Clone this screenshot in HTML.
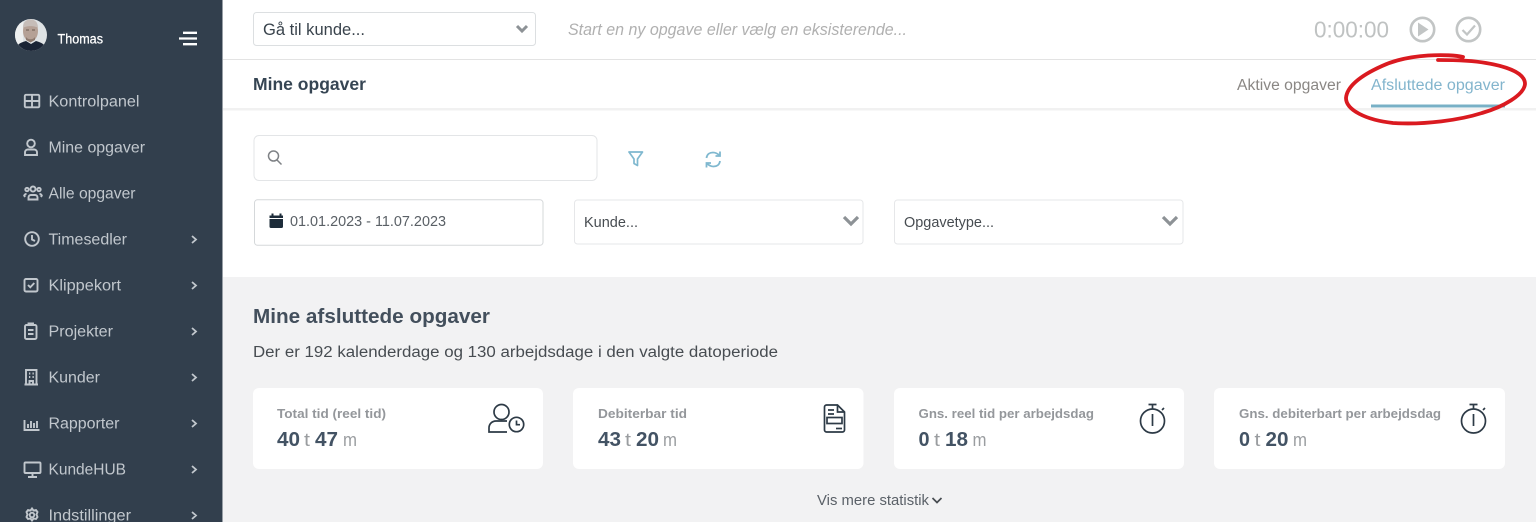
<!DOCTYPE html>
<html lang="da">
<head>
<meta charset="utf-8">
<title>Mine opgaver</title>
<style>
html,body{margin:0;padding:0;width:1536px;height:522px;overflow:hidden;background:#fff}
svg{display:block;position:absolute;left:0;top:0}
text{font-family:"Liberation Sans",sans-serif;white-space:pre}
.nav{font-size:15.5px;fill:#c1c7cd}
.ni{fill:none;stroke:#c1c7cd;stroke-width:1.9}
.ch{fill:none;stroke:#c1c7cd;stroke-width:1.8}
.lb{font-size:13px;font-weight:bold;fill:#94979b}
.v{font-size:20.5px;font-weight:bold;fill:#435364}
.u{font-size:18px;fill:#9a9da0}
.ic{fill:none;stroke:#2d3a46;stroke-width:1.7}
</style>
</head>
<body>
<svg width="1536" height="522" viewBox="0 0 1536 522" xmlns="http://www.w3.org/2000/svg">
<defs><clipPath id="av"><circle cx="31" cy="35" r="16"/></clipPath></defs>
<rect x="223" y="277" width="1313" height="245" fill="#f2f2f3"/>
<rect x="0" y="0" width="222.500" height="522" fill="#323f4d"/>
<rect x="223" y="59" width="1313" height="1" fill="#e3e3e3"/>
<rect x="223" y="108" width="1313" height="2.500" fill="#f1f1f1"/>

<!-- avatar -->
<g clip-path="url(#av)">
<rect x="15" y="19" width="32" height="32" fill="#dfe3e5"/>
<rect x="15" y="19" width="8" height="32" fill="#eef0f0"/>
<ellipse cx="30.500" cy="31" rx="7.500" ry="10.500" fill="#b5a196"/>
<path d="M23 28c0-6 3-8.500 7.500-8.500s7.500 2.500 7.500 8.500c-3-2.500-12-2.500-15 0z" fill="#c6bdb8"/>
<path d="M26 30h3M32 30h3" stroke="#6b5a50" stroke-width="1.100"/>
<path d="M26 37c2 3 7 3 9 0v3l-4.500 2.500-4.500-2.500z" fill="#8d7a6f"/>
<path d="M17 51v-5c2-3 6-4 9-5l5 3 5-3c3 1 7 2 9 5v5z" fill="#1a2435"/>
</g>
<text x="57.500" y="43.500" font-size="13.500" fill="#ffffff" stroke="#ffffff" stroke-width=".25" textLength="45.500" lengthAdjust="spacingAndGlyphs">Thomas</text>
<path d="M183 32.800h14M179 38.500h18M183 44.200h14" stroke="#fff" stroke-width="2.300" fill="none"/>

<!-- nav -->
<text class="nav" x="48.500" y="106.500" textLength="91" lengthAdjust="spacingAndGlyphs">Kontrolpanel</text>
<text class="nav" x="48.500" y="152.500" textLength="96.500" lengthAdjust="spacingAndGlyphs">Mine opgaver</text>
<text class="nav" x="48.500" y="198.500" textLength="87" lengthAdjust="spacingAndGlyphs">Alle opgaver</text>
<text class="nav" x="48.500" y="244.500" textLength="78.500" lengthAdjust="spacingAndGlyphs">Timesedler</text>
<text class="nav" x="48.500" y="290.500" textLength="72.500" lengthAdjust="spacingAndGlyphs">Klippekort</text>
<text class="nav" x="48.500" y="336.500" textLength="64.500" lengthAdjust="spacingAndGlyphs">Projekter</text>
<text class="nav" x="48.500" y="382.500" textLength="51.500" lengthAdjust="spacingAndGlyphs">Kunder</text>
<text class="nav" x="48.500" y="428.500" textLength="71" lengthAdjust="spacingAndGlyphs">Rapporter</text>
<text class="nav" x="48.500" y="474.500" textLength="77.500" lengthAdjust="spacingAndGlyphs">KundeHUB</text>
<text class="nav" x="48.500" y="520.500" textLength="82.500" lengthAdjust="spacingAndGlyphs">Indstillinger</text>

<!-- nav icons -->
<g class="ni">
<rect x="24.800" y="94.800" width="14.500" height="12.500" rx="1.200"/><path d="M24.800 101h14.500M32 94.800v12.500"/>
<circle cx="31" cy="143.500" r="3.800"/><path d="M25 155v-2.500c0-2 1.500-3 3-3h6c1.500 0 3 1 3 3v2.500z"/>
<circle cx="33" cy="189" r="2.500"/><circle cx="27" cy="189.500" r="1.700"/><circle cx="39" cy="189.500" r="1.700"/>
<path d="M28.500 199.500v-2c0-1.500 1-2.500 2.500-2.500h4c1.500 0 2.500 1 2.500 2.500v2zM25 197l-.8-1.500c.5-1 1.300-1.500 2.300-1.500M41 197l.8-1.500c-.5-1-1.300-1.500-2.300-1.500"/>
<circle cx="32" cy="239" r="6.800"/><path d="M32 235v4.500l3 1.500"/>
<rect x="24.500" y="279" width="13" height="12.500" rx="1.500"/><path d="M28 285l2.300 2.300 4-4.300"/>
<rect x="25" y="325" width="11.500" height="14" rx="1.500"/><path d="M28.500 325v-1.500h4.500v1.500M28 330h5.500M28 334h5.500"/>
<path d="M24.500 384.500h13.500M26 384.500v-14.500h10.500v14.500M29 373.500h1.300M32.500 373.500h1.300M29 377h1.300M32.500 377h1.300M29.500 384.500v-3.500h3.500v3.500"/>
<path d="M24.500 420v10h15M28 428v-4M31 428v-7M34 428v-5M37 428v-7"/>
<rect x="24.500" y="462.500" width="16" height="10.500" rx="1"/><path d="M32.500 473v3M28 477h9"/>
<circle cx="32" cy="515" r="2.300"/><path d="M32 508.500l1.500 2 2.500-.5 1.500 2-1 2.500 1 2.500-1.500 2-2.500-.5-1.500 2-1.500-2-2.500.5-1.500-2 1-2.500-1-2.500 1.500-2 2.500.5z"/>
</g>
<g class="ch">
<path d="M192 236l4 3.500-4 3.500M192 282l4 3.500-4 3.500M192 328l4 3.500-4 3.500M192 374l4 3.500-4 3.500M192 420l4 3.500-4 3.500M192 466l4 3.500-4 3.500M192 512l4 3.500-4 3.500"/>
</g>

<!-- top bar -->
<rect x="253.500" y="12.500" width="282" height="33" rx="3" fill="#fff" stroke="#dcdfe1"/>
<text x="263" y="35" font-size="16.500" fill="#39434c" textLength="102" lengthAdjust="spacingAndGlyphs">Gå til kunde...</text>
<path d="M517 26l5 5 5-5" fill="none" stroke="#8d9296" stroke-width="3"/>
<text x="568" y="35" font-size="16.500" font-style="italic" fill="#b0b0b0" textLength="339" lengthAdjust="spacingAndGlyphs">Start en ny opgave eller vælg en eksisterende...</text>
<text x="1314" y="37.500" font-size="23" fill="#bfc2c2" textLength="75" lengthAdjust="spacingAndGlyphs">0:00:00</text>
<circle cx="1422.500" cy="29.500" r="11.700" fill="none" stroke="#c2c5c5" stroke-width="2.600"/>
<path d="M1418 22.500l10.500 7-10.500 7z" fill="#c2c5c5"/>
<circle cx="1468.500" cy="29.500" r="11.700" fill="none" stroke="#c2c5c5" stroke-width="2.600"/>
<path d="M1462.500 30l4.500 4.500 8-9" fill="none" stroke="#c2c5c5" stroke-width="2.200"/>

<!-- subheader -->
<text x="253" y="90" font-size="17.500" font-weight="bold" fill="#364553" textLength="113" lengthAdjust="spacingAndGlyphs">Mine opgaver</text>
<text x="1237" y="90" font-size="15.500" fill="#8a8784" textLength="104" lengthAdjust="spacingAndGlyphs">Aktive opgaver</text>
<text x="1371" y="90" font-size="15.500" fill="#83b5cd" textLength="134" lengthAdjust="spacingAndGlyphs">Afsluttede opgaver</text>
<rect x="1371" y="104.500" width="134" height="3" fill="#78b0c6"/>
<path d="M1463 57C1450 54 1410 53 1382 66C1362 75 1347 86 1346 98C1346 110 1366 120 1393 123C1425 125 1460 120 1482 113C1503 107 1524 95 1525 84C1525 74 1510 67 1486 63C1470 60 1450 60 1438 60" fill="none" stroke="#da1a20" stroke-width="3.800" stroke-linecap="round"/>

<!-- filters -->
<rect x="254" y="135.500" width="343" height="45" rx="5" fill="#fff" stroke="#e3e5e7"/>
<circle cx="273.500" cy="156" r="5" fill="none" stroke="#7f8286" stroke-width="1.500"/>
<path d="M277 160l4.500 4.500" stroke="#7f8286" stroke-width="1.500"/>
<path d="M629 152h13.500l-5 7v6.500l-3.500-2v-4.500z" fill="none" stroke="#7fb8cf" stroke-width="1.700" stroke-linejoin="round"/>
<path d="M706.500 158c.5-4 3.500-5.500 6.500-5.500 3 0 5 1.500 6.500 3M720 151.500v4.500h-4.500M720 161c-.5 4-3.500 5.500-6.500 5.500-3 0-5-1.500-6.500-3M706.500 167.500V163h4.500" fill="none" stroke="#7fb8cf" stroke-width="1.800"/>

<rect x="254.500" y="199.800" width="288.500" height="45.500" rx="3" fill="#fff" stroke="#d5d8da"/>
<path d="M271.500 213.500h2v2h6v-2h2v2h1.500v2.500h-13.500v-2.500h2zM269.500 219h13.500v7.500a1.500 1.500 0 0 1-1.500 1.500h-10.500a1.500 1.500 0 0 1-1.500-1.500z" fill="#1d2c3a"/>
<text x="290" y="226" font-size="14.500" fill="#5a6066" textLength="156" lengthAdjust="spacingAndGlyphs">01.01.2023 - 11.07.2023</text>

<rect x="574.500" y="200" width="288.500" height="44" rx="3" fill="#fff" stroke="#e6e7e9"/>
<text x="584" y="227" font-size="14.500" fill="#474c51" textLength="54" lengthAdjust="spacingAndGlyphs">Kunde...</text>
<path d="M844 217l7 7 7-7" fill="none" stroke="#8d9296" stroke-width="3.200"/>

<rect x="894.500" y="200" width="288.500" height="44" rx="3" fill="#fff" stroke="#e6e7e9"/>
<text x="904" y="227" font-size="14.500" fill="#474c51" textLength="90" lengthAdjust="spacingAndGlyphs">Opgavetype...</text>
<path d="M1163 217l7 7 7-7" fill="none" stroke="#8d9296" stroke-width="3.200"/>

<!-- stats heading -->
<text x="253" y="323" font-size="20.500" font-weight="bold" fill="#434f5c" textLength="237" lengthAdjust="spacingAndGlyphs">Mine afsluttede opgaver</text>
<text x="253" y="357" font-size="15.500" fill="#474c51" textLength="525" lengthAdjust="spacingAndGlyphs">Der er 192 kalenderdage og 130 arbejdsdage i den valgte datoperiode</text>

<!-- cards -->
<rect x="253" y="388" width="290" height="81" rx="6" fill="#fff"/>
<rect x="573" y="388" width="290.500" height="81" rx="6" fill="#fff"/>
<rect x="894" y="388" width="290" height="81" rx="6" fill="#fff"/>
<rect x="1214" y="388" width="291" height="81" rx="6" fill="#fff"/>

<text class="lb" x="277" y="418" textLength="109" lengthAdjust="spacingAndGlyphs">Total tid (reel tid)</text>
<text class="v" x="277" y="446" textLength="23" lengthAdjust="spacingAndGlyphs">40</text>
<text class="u" x="304" y="446" textLength="6" lengthAdjust="spacingAndGlyphs">t</text>
<text class="v" x="315" y="446" textLength="23" lengthAdjust="spacingAndGlyphs">47</text>
<text class="u" x="343" y="446" textLength="14" lengthAdjust="spacingAndGlyphs">m</text>

<text class="lb" x="598" y="418" textLength="89" lengthAdjust="spacingAndGlyphs">Debiterbar tid</text>
<text class="v" x="598" y="446" textLength="23" lengthAdjust="spacingAndGlyphs">43</text>
<text class="u" x="625" y="446" textLength="6" lengthAdjust="spacingAndGlyphs">t</text>
<text class="v" x="636" y="446" textLength="23" lengthAdjust="spacingAndGlyphs">20</text>
<text class="u" x="663" y="446" textLength="14" lengthAdjust="spacingAndGlyphs">m</text>

<text class="lb" x="918.500" y="418" textLength="175.500" lengthAdjust="spacingAndGlyphs">Gns. reel tid per arbejdsdag</text>
<text class="v" x="918.500" y="446" textLength="11" lengthAdjust="spacingAndGlyphs">0</text>
<text class="u" x="934" y="446" textLength="6" lengthAdjust="spacingAndGlyphs">t</text>
<text class="v" x="945" y="446" textLength="23" lengthAdjust="spacingAndGlyphs">18</text>
<text class="u" x="972.500" y="446" textLength="14" lengthAdjust="spacingAndGlyphs">m</text>

<text class="lb" x="1239" y="418" textLength="202" lengthAdjust="spacingAndGlyphs">Gns. debiterbart per arbejdsdag</text>
<text class="v" x="1239" y="446" textLength="11" lengthAdjust="spacingAndGlyphs">0</text>
<text class="u" x="1254.500" y="446" textLength="6" lengthAdjust="spacingAndGlyphs">t</text>
<text class="v" x="1265.500" y="446" textLength="23" lengthAdjust="spacingAndGlyphs">20</text>
<text class="u" x="1293" y="446" textLength="14" lengthAdjust="spacingAndGlyphs">m</text>

<!-- card icons -->
<g class="ic">
<circle cx="501.500" cy="412" r="7.500"/>
<path d="M507 432h-18v-4c0-4 3-7 7-7h11"/>
<circle cx="516.500" cy="424.500" r="7.200" fill="#fff"/>
<path d="M516.500 420.500v4.200h3.500"/>

<path d="M826.500 405h11l7 7v18a2 2 0 0 1-2 2h-16a2 2 0 0 1-2-2v-23a2 2 0 0 1 2-2z"/>
<path d="M837.500 405v7h7M828 410h6M828 414h6"/>
<rect x="827" y="417.500" width="15" height="6"/>
<path d="M836 428.500h6"/>

<circle cx="1152.500" cy="421" r="12"/>
<path d="M1152.500 414v12M1152.500 409v-4M1148.500 404.500h8M1162 410l2-2"/>
<circle cx="1473.500" cy="421" r="12"/>
<path d="M1473.500 414v12M1473.500 409v-4M1469.500 404.500h8M1483 410l2-2"/>
</g>

<text x="817" y="505" font-size="14.500" fill="#5b6168" textLength="112" lengthAdjust="spacingAndGlyphs">Vis mere statistik</text>
<path d="M932.500 498l4.500 4.500 4.500-4.500" fill="none" stroke="#474c51" stroke-width="1.700"/>
</svg>
</body>
</html>
